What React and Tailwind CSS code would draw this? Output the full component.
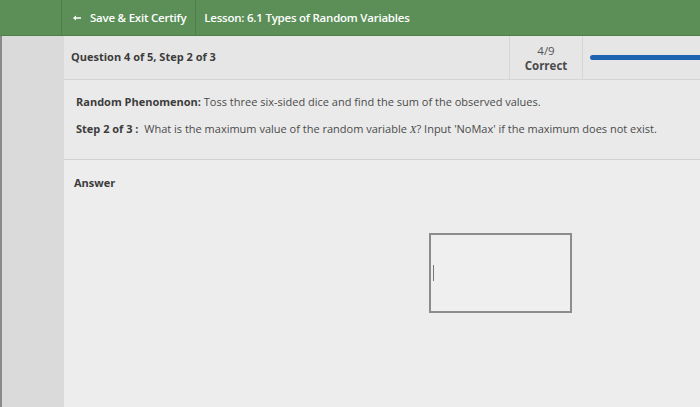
import React from 'react';

const App = () => {
  return (
    <div className="w-[700px] h-[407px] overflow-hidden flex flex-col bg-[#dcdcdc] text-[#3a3a3a]" style={{ fontFamily: '"Open Sans", "Liberation Sans", sans-serif' }}>
      <header className="h-[36px] flex items-stretch bg-[#5b8f57] text-white text-[11.5px] font-semibold tracking-[-0.02em] border-b border-[#4f7f4b]">
        <div className="w-[62px] border-r border-[#4e7c4a]" />
        <button className="flex items-center gap-[9px] pl-[11px] pr-[9px] border-r border-[#4e7c4a]">
          <svg width="8" height="6" viewBox="0 0 8 6" className="shrink-0">
            <path d="M0 3 L3 0.5 L3 2.2 L8 2.2 L8 3.8 L3 3.8 L3 5.5 Z" fill="white" />
          </svg>
          <span>Save &amp; Exit Certify</span>
        </button>
        <div className="flex items-center pl-[8px]">Lesson: 6.1 Types of Random Variables</div>
      </header>
      <div className="flex-1 flex">
        <aside className="w-[64px] bg-[#dadada] border-l-2 border-[#8a8a8a]" />
        <main className="flex-1 flex flex-col">
          <div className="h-[44px] flex items-stretch bg-[#e6e6e6] border-b border-[#d4d4d4]">
            <div className="flex-1 flex items-center pl-[7px] text-[11px] font-bold text-[#3c3c3c]">Question 4 of 5, Step 2 of 3</div>
            <div className="w-[74px] flex flex-col items-center justify-center border-l border-r border-[#d6d6d6] text-[11.5px] leading-[15px]">
              <span className="text-[#555]">4/9</span>
              <span className="font-bold text-[#4a4a4a]">Correct</span>
            </div>
            <div className="w-[117px] flex items-center pl-[7px]">
              <div className="h-[5px] w-full bg-[#1d63b0] rounded-l-sm" />
            </div>
          </div>
          <section className="h-[80px] bg-[#eaeaea] border-b border-[#d2d2d2] pl-[12px] pt-[14px] text-[11px] text-[#4a4a4a] flex flex-col gap-[10px]">
            <p>
              <span className="font-bold text-[#3c3c3c]">Random Phenomenon:</span> Toss three six-sided dice and find the sum of the observed values.
            </p>
            <p>
              <span className="font-bold text-[#3c3c3c]">Step 2 of 3 :</span>&nbsp; What is the maximum value of the random variable <span className="italic" style={{ fontFamily: '"Liberation Serif", serif' }}>X</span>? Input 'NoMax' if the maximum does not exist.
            </p>
          </section>
          <section className="flex-1 bg-[#ededed] pl-[10px] pt-[15px] text-[11px]">
            <p className="font-bold text-[#3c3c3c]">Answer</p>
            <div className="mt-[41px] ml-[355px] w-[143px] h-[80px] border-2 border-[#8c8c8c] bg-[#efefef] flex items-center pl-[2px]">
              <div className="w-[1px] h-[16px] bg-[#777]" />
            </div>
          </section>
        </main>
      </div>
    </div>
  );
};

export default App;
